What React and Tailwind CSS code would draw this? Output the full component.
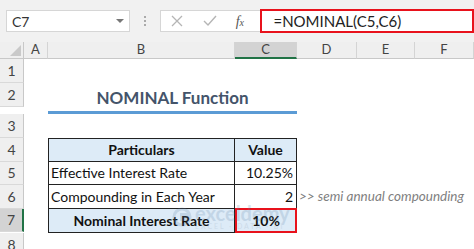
import React from "react";

const cols = ["A", "B", "C", "D", "E", "F"];
const rowH = ["h-[24px]", "h-[24px]", "h-[24px]", "h-[24px]", "h-[23px]", "h-[24px]", "h-[23px]", "h-[24px]"];

function RowHead({ n }) {
  const sel = n === 7;
  return (
    <div
      className={`${rowH[n - 1]} flex items-center justify-center text-[14px] text-[#444] border-b border-[#d9d9d9] ${
        sel ? "bg-[#d3d3d3] border-r-2 border-r-[#217346]" : "bg-[#efefef] border-r border-r-[#c8c8c8]"
      }`}
    >
      {n}
    </div>
  );
}

export default function App() {
  return (
    <div className="relative w-[474px] h-[249px] overflow-hidden bg-white font-['Lato','Open_Sans',sans-serif]">
      {/* TOOLBAR */}
      <div className="h-[42px] bg-[#f1f1f1] flex items-start pt-[10px]">
        <div className="ml-[6px] w-[124px] h-[22px] bg-white border border-[#d6d6d6] flex items-center justify-between pl-[5px] pr-[5px]">
          <span className="text-[14px] text-[#333]">C7</span>
          <span className="w-0 h-0 border-l-[4px] border-r-[4px] border-t-[4px] border-l-transparent border-r-transparent border-t-[#777]" />
        </div>
        <div className="w-[30px] h-[22px] flex flex-col items-center justify-center gap-[2px]">
          <span className="w-[2px] h-[2px] bg-[#aaa]" />
          <span className="w-[2px] h-[2px] bg-[#aaa]" />
          <span className="w-[2px] h-[2px] bg-[#aaa]" />
        </div>
        <div className="w-[101px] h-[22px] bg-white border border-[#d6d6d6] border-r-0 flex items-center">
          <svg width="12" height="12" viewBox="0 0 12 12" className="ml-[10px]">
            <path d="M1 1 L11 11 M11 1 L1 11" stroke="#b5b5b5" strokeWidth="1.3" fill="none" />
          </svg>
          <svg width="14" height="12" viewBox="0 0 14 12" className="ml-[20px]">
            <path d="M1 6 L5 10 L13 1" stroke="#b5b5b5" strokeWidth="1.4" fill="none" />
          </svg>
          <span className="ml-[19px] text-[14px] italic text-[#555] font-['Liberation_Serif',serif]">
            f<span className="text-[10px]">x</span>
          </span>
        </div>
        <div className="-mt-[1px] w-[214px] h-[24px] bg-white border-2 border-[#e8121c] flex items-center pl-[11px]">
          <span className="text-[15px] text-[#222]">=NOMINAL(C5,C6)</span>
        </div>
      </div>

      {/* SHEET GRID */}
      <div className="grid grid-cols-[24px_24px_187px_62px_60px_58px_59px]">
        {/* header row */}
        <div className="h-[17px] bg-[#efefef] border-b border-[#c8c8c8] border-r border-r-[#c8c8c8] flex items-end justify-end p-[2px]">
          <svg width="11" height="11" viewBox="0 0 11 11">
            <path d="M11 0 L11 11 L0 11 Z" fill="#c9c9c9" />
          </svg>
        </div>
        {cols.map((c) => (
          <div
            key={c}
            className={`h-[17px] flex items-center justify-center text-[13px] text-[#444] border-r border-[#d4d4d4] ${
              c === "C" ? "bg-[#d3d3d3] border-b-2 border-b-[#217346]" : "bg-[#efefef] border-b border-b-[#c8c8c8]"
            }`}
          >
            {c}
          </div>
        ))}

        {/* row 1 */}
        <RowHead n={1} />
        <div className="col-span-6" />

        {/* row 2 */}
        <RowHead n={2} />
        <div />
        <div className="col-span-2 flex items-center justify-center border-b-[3px] border-[#5b9bd5] pt-[2px]">
          <span className="text-[17px] font-bold text-[#44546a]">NOMINAL Function</span>
        </div>
        <div className="col-span-3" />

        {/* row 3 */}
        <RowHead n={3} />
        <div className="col-span-6" />

        {/* row 4 */}
        <RowHead n={4} />
        <div />
        <div className="bg-[#ddebf7] border border-[#222] flex items-center justify-center text-[14px] font-bold text-[#111]">
          Particulars
        </div>
        <div className="bg-[#ddebf7] border border-l-0 border-[#222] flex items-center justify-center text-[14px] font-bold text-[#111]">
          Value
        </div>
        <div className="col-span-3" />

        {/* row 5 */}
        <RowHead n={5} />
        <div />
        <div className="border-l border-r border-b border-[#222] flex items-center pl-[2px] text-[14px] text-[#111]">
          Effective Interest Rate
        </div>
        <div className="border-r border-b border-[#222] flex items-center justify-end pr-[3px] text-[14px] text-[#111]">
          10.25%
        </div>
        <div className="col-span-3" />

        {/* row 6 */}
        <RowHead n={6} />
        <div />
        <div className="border-l border-r border-b border-[#222] flex items-center pl-[2px] text-[14px] text-[#111]">
          Compounding in Each Year
        </div>
        <div className="border-r border-b border-[#222] flex items-center justify-end pr-[3px] text-[14px] text-[#111]">
          2
        </div>
        <div className="col-span-3 flex items-center pl-[2px] text-[13.5px] italic text-[#7f7f7f] whitespace-nowrap">
          &gt;&gt; semi annual compounding
        </div>

        {/* row 7 */}
        <RowHead n={7} />
        <div />
        <div className="bg-[#ddebf7] border-l border-r border-b border-[#222] flex items-center justify-center text-[14px] font-bold text-[#111]">
          Nominal Interest Rate
        </div>
        <div className="bg-[#ddebf7] border-2 border-[#e8121c] -mt-[1px] flex items-center justify-center text-[14px] font-bold text-[#111]">
          10%
        </div>
        <div className="col-span-3" />

        {/* row 8 */}
        <RowHead n={8} />
        <div className="col-span-6" />
      </div>

      {/* watermark */}
      <div className="absolute left-[172px] top-[203px] flex items-center gap-[3px] opacity-20 pointer-events-none">
        <svg width="20" height="20" viewBox="0 0 20 20">
          <circle cx="10" cy="10" r="8" fill="none" stroke="#5b7fa6" strokeWidth="3" />
          <rect x="8" y="6" width="10" height="8" fill="#5b7fa6" />
        </svg>
        <div className="flex flex-col leading-none">
          <span className="text-[20px] font-bold text-[#5b7fa6]">exceldemy</span>
          <span className="text-[7px] tracking-[2px] text-[#8a9bb0]">EXCEL · DATA · BI</span>
        </div>
      </div>
    </div>
  );
}
